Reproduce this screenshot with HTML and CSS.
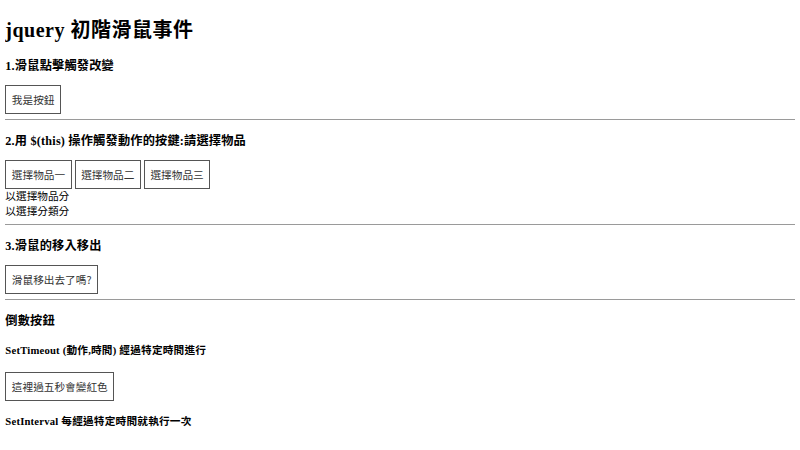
FILE: index.html
```html
<!DOCTYPE html>
<html lang="zh-Hant">
<head>
<meta charset="utf-8">
<title>jquery 初階滑鼠事件</title>
<link rel="stylesheet" href="styles.css">
</head>
<body>
<h1>jquery 初階滑鼠事件</h1>
<h3>1.滑鼠點擊觸發改變</h3>
<div class="btn-row">
<button class="btn">我是按鈕</button>
</div>
<hr>
<h3>2.用 $(this) 操作觸發動作的按鍵:請選擇物品</h3>
<div class="btn-row">
<button class="btn">選擇物品一</button>
<button class="btn">選擇物品二</button>
<button class="btn">選擇物品三</button>
</div>
<div class="line">以選擇物品分</div>
<div class="line">以選擇分類分</div>
<hr>
<h3>3.滑鼠的移入移出</h3>
<div class="btn-row">
<button class="btn">滑鼠移出去了嗎?</button>
</div>
<hr>
<h3>倒數按鈕</h3>
<h4>SetTimeout (動作,時間) 經過特定時間進行</h4>
<div class="btn-row">
<button class="btn">這裡過五秒會變紅色</button>
</div>
<h4>SetInterval 每經過特定時間就執行一次</h4>
</body>
</html>
```
FILE: styles.css
```css
body {
  margin: 5.33px;
  font-family: "Liberation Serif", "Noto Sans CJK TC", serif;
  font-size: 10.67px;
  line-height: 15px;
  color: #000;
  background: #fff;
}
h1 {
  font-size: 20px;
  line-height: 25px;
  margin: 13px 0 14.5px;
  letter-spacing: 0.5px;
}
h3 {
  font-size: 12.2px;
  line-height: 17px;
  margin: 12.5px 0 10.5px;
  letter-spacing: 0.2px;
}
h4 {
  font-size: 10.67px;
  line-height: 15px;
  margin: 13.5px 0;
  letter-spacing: 0.2px;
}
.btn-row {
  display: flex;
  gap: 3px;
}
.btn {
  font-family: "Noto Sans CJK TC", sans-serif;
  font-size: 10.67px;
  line-height: 15px;
  background: #fff;
  border: 1px solid #555;
  padding: 6px 5.5px;
  margin: 0;
  color: #333;
}
hr {
  border: 0;
  border-top: 1px solid #9a9a9a;
  margin: 5px 0;
}
```
